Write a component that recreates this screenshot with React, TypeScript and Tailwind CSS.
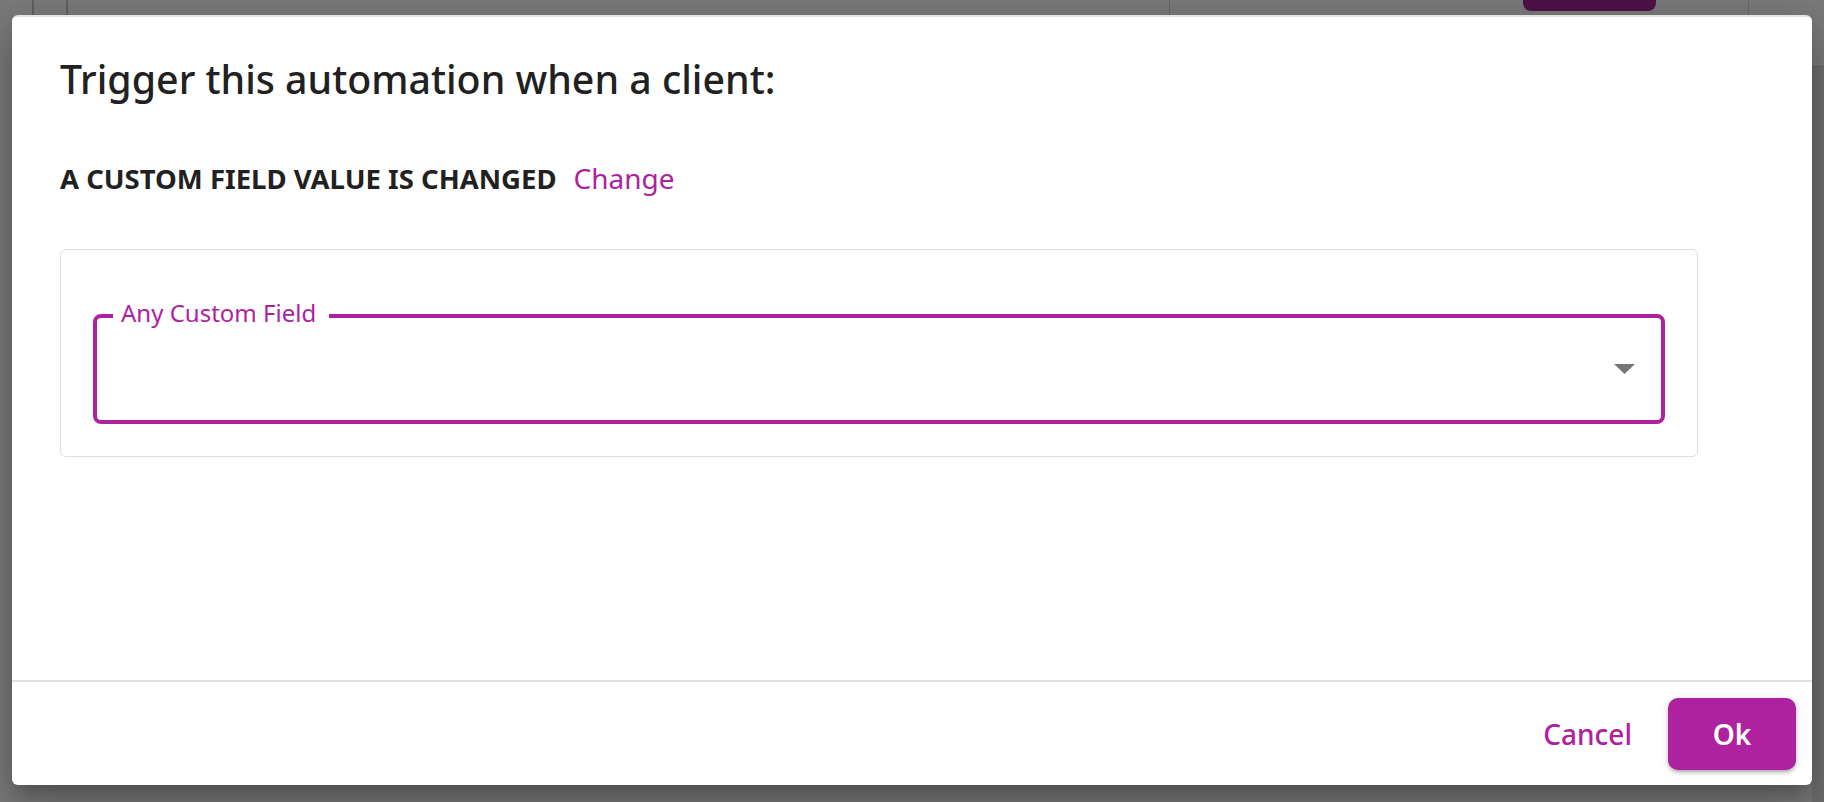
import React from "react";

export default function App() {
  return (
    <div className="relative w-[1824px] h-[802px] overflow-hidden bg-[#7a7a7a] font-['Noto_Sans',sans-serif]">
      {/* page behind the backdrop */}
      <div className="absolute left-[32px] top-0 h-[15px] w-[2px] bg-[#5f5f5f]" />
      <div className="absolute left-[66px] top-0 h-[15px] w-[2px] bg-[#5f5f5f]" />
      <div className="absolute left-[1169px] top-0 h-[15px] w-[1px] bg-[#686868]" />
      <div className="absolute left-[1523px] top-[-20px] h-[31px] w-[133px] rounded-[8px] bg-[#4f1249]" />
      <div className="absolute left-[1748px] top-0 h-[15px] w-[1px] bg-[#6a6a6a]" />
      <div className="absolute left-[1812px] right-0 top-[66px] bottom-0 border-t border-[#656565] bg-[#6e6e6e]" />

      {/* dialog */}
      <div className="absolute left-[12px] top-[15px] w-[1800px] h-[770px] flex flex-col bg-white rounded-[6px] border-t-2 border-[#e3e3e3] shadow-[0_11px_15px_-7px_rgba(0,0,0,0.2),0_24px_38px_3px_rgba(0,0,0,0.14),0_9px_46px_8px_rgba(0,0,0,0.12)]">
        <div className="flex-1 px-[48px] pt-[35px]">
          <h2 className="text-[39.3px] leading-[54px] font-medium text-[#212121]">
            Trigger this automation when a client:
          </h2>
          <div className="mt-[53px] flex items-baseline gap-[17px] leading-[38px]">
            <span className="text-[27.5px] font-bold text-[#212121]">A CUSTOM FIELD VALUE IS CHANGED</span>
            <span className="text-[28px] text-[#ae22a0]">Change</span>
          </div>
          <div className="mt-[51px] w-[1638px] h-[208px] border border-[#dedede] rounded-[6px] px-[32px] pt-[64px] pb-[32px]">
            <div className="relative h-[110px] border-[4px] border-[#ae22a0] rounded-[8px] flex items-center justify-end pr-[26px]">
              <span className="absolute left-[16px] -top-[21px] bg-white pl-[8px] pr-[13px] text-[24px] leading-[32px] text-[#ae22a0]">
                Any Custom Field
              </span>
              <svg width="21" height="10" viewBox="0 0 21 10">
                <polygon points="0,0 21,0 10.5,10" fill="#757575" />
              </svg>
            </div>
          </div>
        </div>
        <div className="h-[105px] border-t-2 border-[#e0e0e0] flex items-center justify-end pr-[16px] gap-[20px]">
          <button className="h-[72px] px-[16px] text-[28px] font-medium text-[#ae22a0]">
            Cancel
          </button>
          <button className="w-[128px] h-[72px] rounded-[10px] bg-[#ae22a0] text-white text-[28px] font-semibold shadow-[0_3px_3px_-2px_rgba(0,0,0,0.2),0_3px_4px_0_rgba(0,0,0,0.14),0_1px_8px_0_rgba(0,0,0,0.12)]">
            Ok
          </button>
        </div>
      </div>
    </div>
  );
}
